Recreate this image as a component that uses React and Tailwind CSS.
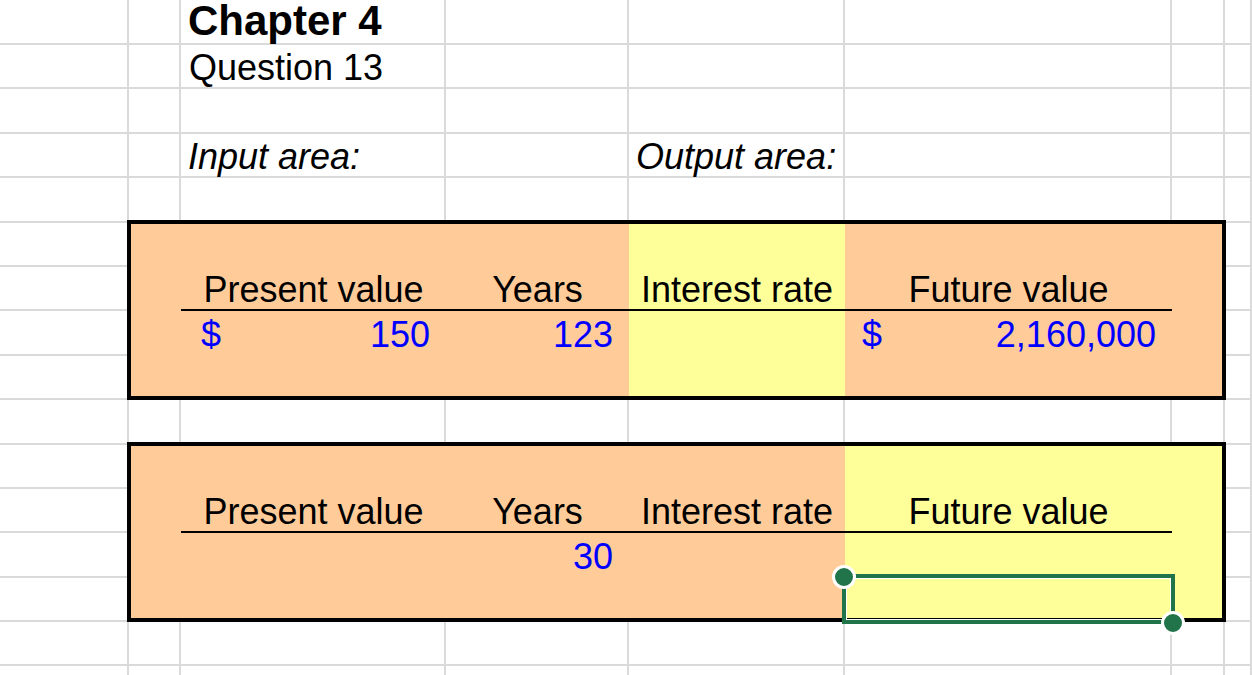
import React from 'react';

const ORANGE = 'bg-[#ffcc99]';
const YELLOW = 'bg-[#ffff99]';

function inBox(r, c) {
  if (c < 2 || c > 7) return null;
  if (r >= 6 && r <= 9) return c === 5 ? YELLOW : ORANGE;
  if (r >= 11 && r <= 14) return c >= 6 ? YELLOW : ORANGE;
  return null;
}

const Head = ({ children }) => <span className="w-full text-center text-black">{children}</span>;

const Money = ({ value, pl }) => (
  <span className={`flex w-full justify-between pr-[16px] text-[#0000ff] ${pl}`}>
    <span>$</span>
    <span>{value}</span>
  </span>
);

const Num = ({ children }) => <span className="w-full pr-[16px] text-right text-[#0000ff]">{children}</span>;

const content = {
  '1-3': <span className="pb-[2px] pl-[7px] text-[42px] leading-[38px] font-bold">Chapter 4</span>,
  '2-3': <span className="pl-[8px]">Question 13</span>,
  '4-3': <span className="pl-[7px] italic">Input area:</span>,
  '4-5': <span className="pl-[7px] italic">Output area:</span>,
  '7-3': <Head>Present value</Head>,
  '7-4': <Head>Years</Head>,
  '7-5': <Head>Interest rate</Head>,
  '7-6': <Head>Future value</Head>,
  '8-3': <Money value="150" pl="pl-[20px]" />,
  '8-4': <Num>123</Num>,
  '8-6': <Money value="2,160,000" pl="pl-[17px]" />,
  '12-3': <Head>Present value</Head>,
  '12-4': <Head>Years</Head>,
  '12-5': <Head>Interest rate</Head>,
  '12-6': <Head>Future value</Head>,
  '13-4': <Num>30</Num>,
};

export default function App() {
  const cells = [];
  for (let r = 1; r <= 16; r++) {
    for (let c = 1; c <= 8; c++) {
      const fill = inBox(r, c);
      const underline = (r === 7 || r === 12) && c >= 3 && c <= 6;
      let edge = 'border-r-2 border-b-2 border-[#dadada] bg-white';
      if (fill) edge = `border-b-2 ${underline ? 'border-black' : 'border-transparent'} ${fill}`;
      cells.push(
        <div
          key={`${r}-${c}`}
          style={{ gridRow: r, gridColumn: c }}
          className={`flex min-w-0 items-end whitespace-nowrap pb-[1px] leading-none ${edge}`}
        >
          {content[`${r}-${c}`]}
        </div>
      );
    }
  }

  return (
    <div className="h-[675px] w-full overflow-hidden bg-white font-['Liberation_Sans',Arial,sans-serif] text-[36px] text-black">
      <div className="grid grid-cols-[129px_52px_265px_183px_216px_327px_53px_1fr] grid-rows-[45px_repeat(15,44.4px)]">
        {cells}

        {/* outlined input / output blocks */}
        <div className="pointer-events-none z-10 col-start-2 col-end-8 row-start-6 row-end-10 -mt-[3px] -ml-[2px] -mr-[1px] border-4 border-black" />
        <div className="pointer-events-none z-10 col-start-2 col-end-8 row-start-11 row-end-15 -mt-[3px] -ml-[2px] -mr-[1px] border-4 border-black" />

        {/* active cell selection */}
        <div className="pointer-events-none relative z-20 col-start-6 row-start-14 -mt-[4px] -ml-[3px] -mr-[3px] -mb-[2px] border-4 border-[#21744a] shadow-[inset_0_0_0_1px_#fff]">
          <span className="absolute -top-[13px] -left-[14px] h-6 w-6 rounded-full border-[3px] border-white bg-[#21744a]" />
          <span className="absolute -right-[14px] -bottom-[15px] h-6 w-6 rounded-full border-[3px] border-white bg-[#21744a]" />
        </div>
      </div>
    </div>
  );
}
